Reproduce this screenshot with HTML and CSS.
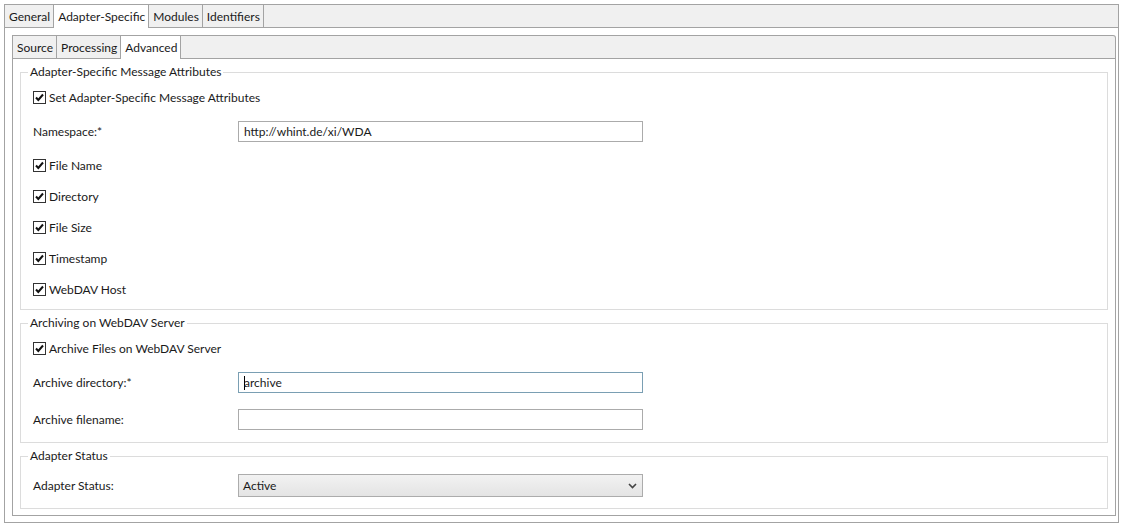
FILE: index.html
```html
<!DOCTYPE html>
<html>
<head>
<meta charset="utf-8">
<link rel="stylesheet" href="styles.css">
</head>
<body>
<div class="app">
  <div class="tabstrip outer-strip">
    <div class="tab">General</div>
    <div class="tab active">Adapter-Specific</div>
    <div class="tab">Modules</div>
    <div class="tab">Identifiers</div>
  </div>
  <div class="outer-panel">
    <div class="tabstrip inner-strip">
      <div class="tab">Source</div>
      <div class="tab">Processing</div>
      <div class="tab active">Advanced</div>
    </div>
    <div class="inner-panel">
      <fieldset class="group">
        <legend>Adapter-Specific Message Attributes</legend>
        <div class="row check-row"><span class="cb"><svg viewBox="0 0 13 13" width="13" height="13"><path d="M3 6.5 L5.3 9 L10 3.5" fill="none" stroke="#111" stroke-width="2"/></svg></span><span>Set Adapter-Specific Message Attributes</span></div>
        <div class="row field-row"><span class="label">Namespace:*</span><div class="input">http://whint.de/xi/WDA</div></div>
        <div class="row check-row"><span class="cb"><svg viewBox="0 0 13 13" width="13" height="13"><path d="M3 6.5 L5.3 9 L10 3.5" fill="none" stroke="#111" stroke-width="2"/></svg></span><span>File Name</span></div>
        <div class="row check-row"><span class="cb"><svg viewBox="0 0 13 13" width="13" height="13"><path d="M3 6.5 L5.3 9 L10 3.5" fill="none" stroke="#111" stroke-width="2"/></svg></span><span>Directory</span></div>
        <div class="row check-row"><span class="cb"><svg viewBox="0 0 13 13" width="13" height="13"><path d="M3 6.5 L5.3 9 L10 3.5" fill="none" stroke="#111" stroke-width="2"/></svg></span><span>File Size</span></div>
        <div class="row check-row"><span class="cb"><svg viewBox="0 0 13 13" width="13" height="13"><path d="M3 6.5 L5.3 9 L10 3.5" fill="none" stroke="#111" stroke-width="2"/></svg></span><span>Timestamp</span></div>
        <div class="row check-row"><span class="cb"><svg viewBox="0 0 13 13" width="13" height="13"><path d="M3 6.5 L5.3 9 L10 3.5" fill="none" stroke="#111" stroke-width="2"/></svg></span><span>WebDAV Host</span></div>
      </fieldset>
      <fieldset class="group">
        <legend>Archiving on WebDAV Server</legend>
        <div class="row check-row"><span class="cb"><svg viewBox="0 0 13 13" width="13" height="13"><path d="M3 6.5 L5.3 9 L10 3.5" fill="none" stroke="#111" stroke-width="2"/></svg></span><span>Archive Files on WebDAV Server</span></div>
        <div class="row field-row"><span class="label">Archive directory:*</span><div class="input focused"><span class="caret"></span>archive</div></div>
        <div class="row field-row"><span class="label">Archive filename:</span><div class="input"></div></div>
      </fieldset>
      <fieldset class="group status-group">
        <legend>Adapter Status</legend>
        <div class="row field-row"><span class="label">Adapter Status:</span><div class="select"><span>Active</span><svg class="chev" viewBox="0 0 9 6" width="9" height="6"><path d="M1 1 L4.5 4.5 L8 1" fill="none" stroke="#444" stroke-width="1.6"/></svg></div></div>
      </fieldset>
    </div>
  </div>
</div>
</body>
</html>
```

FILE: styles.css
```css
* { box-sizing: border-box; }
html, body { margin: 0; padding: 0; background: #fff; }
body {
  font-family: "Lato", "Liberation Sans", sans-serif;
  font-size: 12px;
  color: #1a1a1a;
}
.app {
  padding: 4px 0 0 4px;
  width: 1119px;
}
.tabstrip {
  display: flex;
  height: 24px;
  background: #f0f0f0;
  border-top: 1px solid #a3a3a3;
  border-right: 1px solid #a3a3a3;
  border-bottom: 1px solid #a3a3a3;
}
.tab {
  display: flex;
  align-items: center;
  padding: 0 3px 0 4px;
  border-right: 1px solid #a3a3a3;
  background: #f0f0f0;
}
.tab:first-child { border-left: 1px solid #a3a3a3; }
.tab.active {
  background: #fff;
  margin-bottom: -1px;
}
.inner-strip { border-top-right-radius: 3px; flex: none; }
.outer-panel {
  height: 495px;
  border-left: 1px solid #a3a3a3;
  border-right: 1px solid #a3a3a3;
  border-bottom: 1px solid #a3a3a3;
  padding: 7px 2px 6px 7px;
  display: flex;
  flex-direction: column;
}
.inner-panel {
  flex: 1;
  min-height: 0;
  border-left: 1px solid #a3a3a3;
  border-right: 1px solid #a3a3a3;
  border-bottom: 1px solid #a3a3a3;
  padding: 5px 7px 7px 7px;
  display: flex;
  flex-direction: column;
  gap: 5px;
}
.group {
  flex: none;
  margin: 0;
  border: 1px solid #dcdcdc;
  padding: 2px 12px 4px 12px;
  min-width: 0;
}
.status-group { padding-top: 3px; }
.group legend {
  padding: 0 2px;
  margin-left: -5px;
  line-height: 16px;
  height: 16px;
}
.row {
  display: flex;
  align-items: center;
}
.check-row { height: 31px; }
.field-row { height: 37px; }
.cb {
  width: 13px;
  height: 13px;
  border: 1px solid #333;
  background: #fff;
  margin-right: 3px;
  display: flex;
  align-items: center;
  justify-content: center;
  flex: none;
}
.cb svg { display: block; flex: none; }
.label { width: 205px; flex: none; }
.input {
  width: 405px;
  height: 21px;
  border: 1px solid #ababab;
  background: #fff;
  padding: 0 5px;
  display: flex;
  align-items: center;
}
.input.focused { border-color: #7a9fb3; }
.caret {
  width: 1px;
  height: 14px;
  background: #000;
  margin-right: -1px;
}
.select {
  width: 405px;
  height: 23px;
  border: 1px solid #acacac;
  background: linear-gradient(#f2f2f2, #e4e4e4);
  padding: 0 5px 0 4px;
  display: flex;
  align-items: center;
  justify-content: space-between;
}
.chev { display: block; }
```
